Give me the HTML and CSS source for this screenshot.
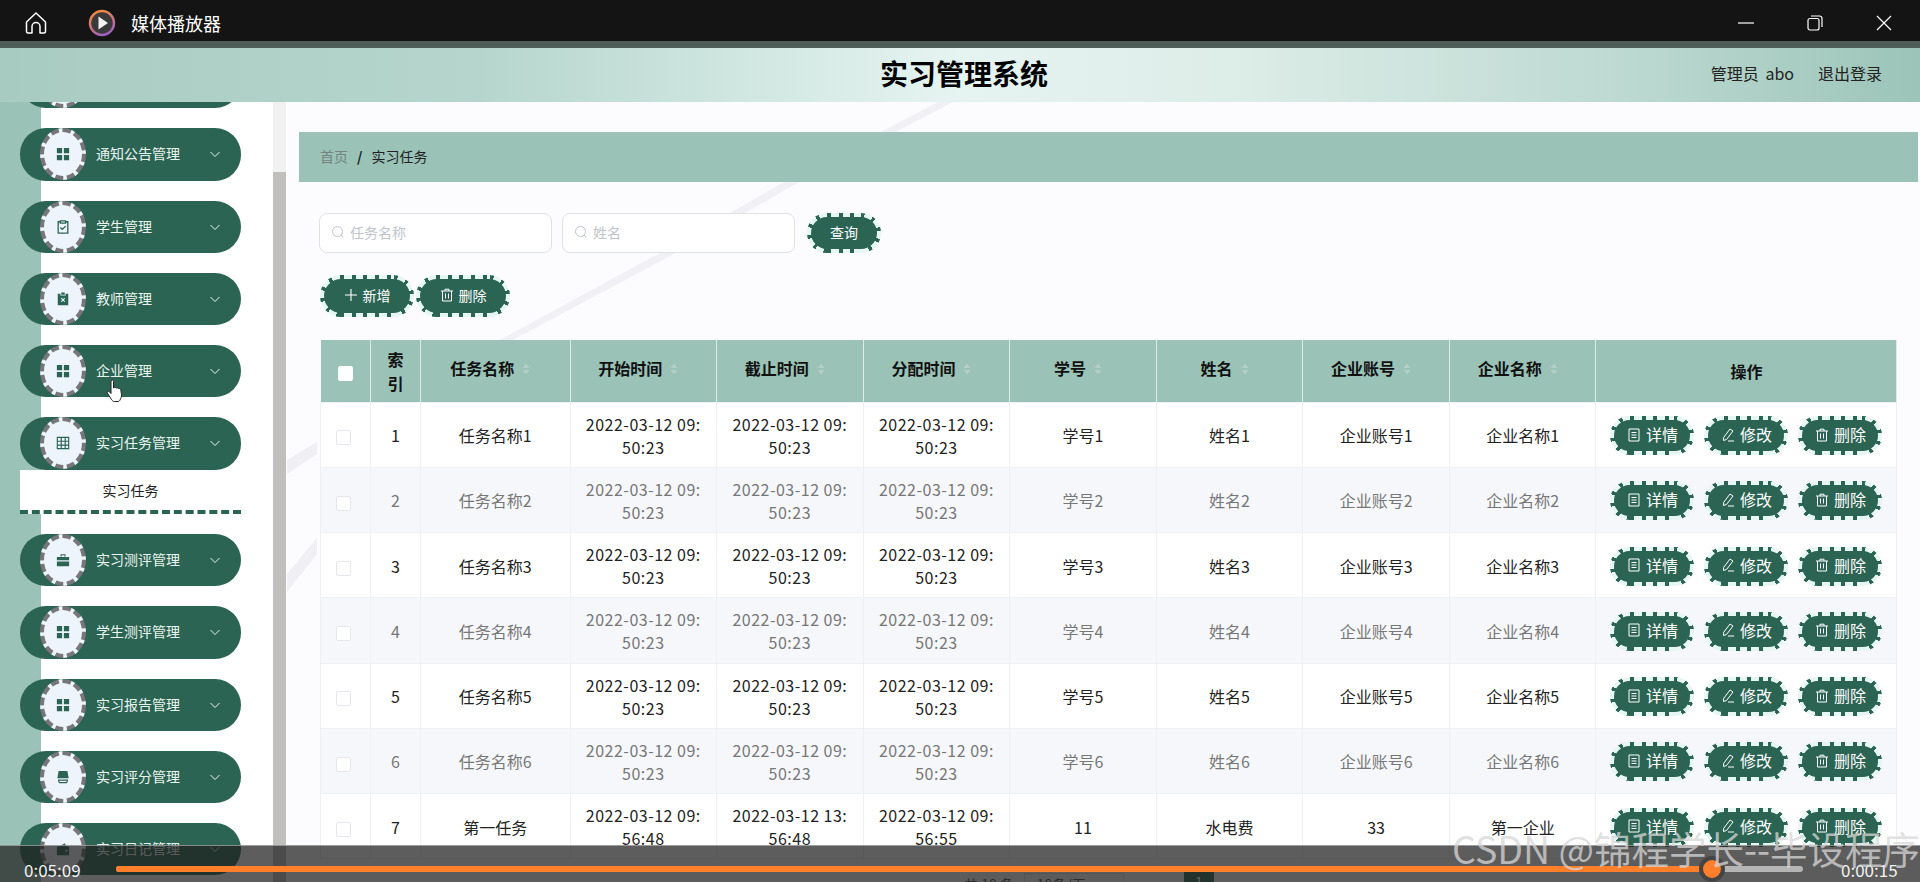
FILE: index.html
```html
<!DOCTYPE html>
<html lang="en">

<head>
    <meta charset="UTF-8">
    <title>实习管理系统</title>
    <link rel="stylesheet" href="styles.css">
</head>

<body>
    <svg class="icon-defs" width="0" height="0">
        <symbol id="i-grid" viewBox="0 0 16 16"><path d="M1 1h6v6H1zM9 1h6v6H9zM1 9h6v6H1zM9 9h6v6H9z" fill="currentColor"/></symbol>
        <symbol id="i-claim" viewBox="0 0 16 16"><path d="M5 2H2.500v13h11V2H11M5 1h6v2.500H5zM5 8.500l2.200 2.200L11 7" fill="none" stroke="currentColor" stroke-width="1.500"/></symbol>
        <symbol id="i-release" viewBox="0 0 16 16"><path d="M2 2h3v2h6V2h3v13H2zM6 0.500h4V3H6z" fill="currentColor"/><path d="M6 7l4 4M10 7l-4 4" stroke="#eef4fb" stroke-width="1.300"/></symbol>
        <symbol id="i-table" viewBox="0 0 16 16"><path d="M1.500 1.500h13v13h-13zM1.500 6h13M1.500 10.500h13M6 1.500v13M10.500 1.500v13" fill="none" stroke="currentColor" stroke-width="1.300"/></symbol>
        <symbol id="i-case" viewBox="0 0 16 16"><path d="M1 4.500h14v3.800H1zM1 9.600h14V15H1z" fill="currentColor"/><path d="M5.800 4V2h4.400v2" fill="none" stroke="currentColor" stroke-width="1.300"/></symbol>
        <symbol id="i-tray" viewBox="0 0 16 16"><path d="M3 1h10l1.500 8.500H1.500z" fill="currentColor"/><path d="M3 11.500h10v1.200l-1 1.800H4l-1-1.800z" fill="none" stroke="currentColor" stroke-width="1.300"/></symbol>
        <symbol id="i-wallet" viewBox="0 0 16 16"><path d="M1 5h14v10H1zM4 5l6-3.500L12 5" fill="currentColor"/><circle cx="12" cy="10" r="1.200" fill="#eef4fb"/></symbol>
        <symbol id="i-chevron" viewBox="0 0 12 12"><path d="M1.500 4l4.500 4.500L10.500 4" fill="none" stroke="currentColor" stroke-width="1"/></symbol>
        <symbol id="i-search" viewBox="0 0 14 14"><circle cx="6.500" cy="6.500" r="5" fill="none" stroke="currentColor"/><path d="M10 10l2.500 2.500" stroke="currentColor"/></symbol>
        <symbol id="i-plus" viewBox="0 0 14 14"><path d="M7 1v12M1 7h12" stroke="currentColor" stroke-width="1.100"/></symbol>
        <symbol id="i-trash" viewBox="0 0 14 14"><path d="M1 3h12M5 3V1.200h4V3M2.500 3v10h9V3M5.500 5.500v5M8.500 5.500v5" fill="none" stroke="currentColor"/></symbol>
        <symbol id="i-doc" viewBox="0 0 14 14"><path d="M2 1h10v12H2zM4.500 4.500h5M4.500 7h5M4.500 9.500h5" fill="none" stroke="currentColor"/></symbol>
        <symbol id="i-pen" viewBox="0 0 14 14"><path d="M9 1l3 2-6.500 8.500-3 1 .2-3.200zM7 13h6" fill="none" stroke="currentColor"/></symbol>
        <symbol id="i-caret" viewBox="0 0 8 12"><path d="M4 0.500L7.500 5h-7zM4 11.500L.5 7h7z" fill="currentColor"/></symbol>
    </svg>

    <!-- player window bar -->
    <div class="titlebar">
        <svg class="tb-home" width="24" height="24" viewBox="0 0 24 24"><path d="M2.500 11L12 2l9.500 9v9.500a1.500 1.500 0 0 1-1.500 1.500h-4v-6.500a4 4 0 0 0-8 0V22H4a1.500 1.500 0 0 1-1.500-1.500z" fill="none" stroke="#fff" stroke-width="1.500" stroke-linejoin="round"/></svg>
        <svg class="tb-logo" width="28" height="28" viewBox="0 0 28 28">
            <defs><linearGradient id="ring" x1="0.300" y1="0" x2="0.700" y2="1"><stop offset="0" stop-color="#f58a3c"/><stop offset="1" stop-color="#9a5fc8"/></linearGradient></defs>
            <circle cx="14" cy="14" r="12" fill="#3a3a3a" stroke="url(#ring)" stroke-width="2.500"/>
            <path d="M10.500 7.500L20 14l-9.500 6.500z" fill="#f2f2f2"/>
        </svg>
        <span class="tb-title">媒体播放器</span>
        <div class="tb-controls">
            <svg width="16" height="16" viewBox="0 0 16 16"><path d="M0 8h16" stroke="#fff" stroke-width="1.200"/></svg>
            <svg width="16" height="16" viewBox="0 0 16 16"><rect x="1" y="3.500" width="11" height="11.500" rx="2" fill="none" stroke="#fff" stroke-width="1.200"/><path d="M4 1h8.500A2.500 2.500 0 0 1 15 3.500V12" fill="none" stroke="#fff" stroke-width="1.200"/></svg>
            <svg width="16" height="16" viewBox="0 0 16 16"><path d="M1 1l14 14M15 1L1 15" stroke="#fff" stroke-width="1.200"/></svg>
        </div>
    </div>
    <div class="titlebar-edge"></div>

    <!-- system header -->
    <div class="header">
        <h1>实习管理系统</h1>
        <div class="header-user">
            <span>管理员 abo</span>
            <span>退出登录</span>
        </div>
    </div>

    <div class="layout">
        <!-- side menu -->
        <div class="sidebar">
            <div class="menu">
                <div class="menu-item"><span class="menu-icon"><svg><use href="#i-grid"/></svg></span><span class="menu-label">首页管理</span><svg class="chevron"><use href="#i-chevron"/></svg></div>
                <div class="menu-item"><span class="menu-icon"><svg><use href="#i-grid"/></svg></span><span class="menu-label">通知公告管理</span><svg class="chevron"><use href="#i-chevron"/></svg></div>
                <div class="menu-item"><span class="menu-icon"><svg><use href="#i-claim"/></svg></span><span class="menu-label">学生管理</span><svg class="chevron"><use href="#i-chevron"/></svg></div>
                <div class="menu-item"><span class="menu-icon"><svg><use href="#i-release"/></svg></span><span class="menu-label">教师管理</span><svg class="chevron"><use href="#i-chevron"/></svg></div>
                <div class="menu-item"><span class="menu-icon"><svg><use href="#i-grid"/></svg></span><span class="menu-label">企业管理</span><svg class="chevron"><use href="#i-chevron"/></svg></div>
                <div class="menu-group">
                    <div class="menu-item"><span class="menu-icon"><svg><use href="#i-table"/></svg></span><span class="menu-label">实习任务管理</span><svg class="chevron"><use href="#i-chevron"/></svg></div>
                    <div class="submenu">实习任务</div>
                </div>
                <div class="menu-item"><span class="menu-icon"><svg><use href="#i-case"/></svg></span><span class="menu-label">实习测评管理</span><svg class="chevron"><use href="#i-chevron"/></svg></div>
                <div class="menu-item"><span class="menu-icon"><svg><use href="#i-grid"/></svg></span><span class="menu-label">学生测评管理</span><svg class="chevron"><use href="#i-chevron"/></svg></div>
                <div class="menu-item"><span class="menu-icon"><svg><use href="#i-grid"/></svg></span><span class="menu-label">实习报告管理</span><svg class="chevron"><use href="#i-chevron"/></svg></div>
                <div class="menu-item"><span class="menu-icon"><svg><use href="#i-tray"/></svg></span><span class="menu-label">实习评分管理</span><svg class="chevron"><use href="#i-chevron"/></svg></div>
                <div class="menu-item"><span class="menu-icon"><svg><use href="#i-wallet"/></svg></span><span class="menu-label">实习日记管理</span><svg class="chevron"><use href="#i-chevron"/></svg></div>
            </div>
            <div class="scrollbar"><div class="scrollbar-thumb"></div></div>
        </div>

        <!-- main content -->
        <div class="main">
            <svg class="main-streaks" width="1633" height="780" viewBox="0 0 1633 780">
                <path d="M655 -2L490 84 369 153 209 240H222L385 153 505 84 670 -2z" fill="#f1f1f5"/>
                <path d="M30 340L0 358V372L30 352zM30 436L0 472V490L30 452z" fill="#f0f0f4"/>
            </svg>
            <div class="breadcrumb"><span class="crumb-home">首页</span><span class="crumb-sep">/</span><span>实习任务</span></div>

            <div class="search-row">
                <div class="search-box"><svg><use href="#i-search"/></svg><input type="text" placeholder="任务名称"></div>
                <div class="search-box"><svg><use href="#i-search"/></svg><input type="text" placeholder="姓名"></div>
                <button class="btn btn-query">查询</button>
            </div>

            <div class="action-row">
                <button class="btn btn-action"><svg><use href="#i-plus"/></svg>新增</button>
                <button class="btn btn-action"><svg><use href="#i-trash"/></svg>删除</button>
            </div>

            <table class="data-table">
                <colgroup>
                    <col class="col-s"><col class="col-s"><col class="col-name">
                    <col class="col-m"><col class="col-m"><col class="col-m"><col class="col-m"><col class="col-m"><col class="col-m"><col class="col-m">
                    <col class="col-ops">
                </colgroup>
                <thead>
                    <tr>
                        <th><span class="check check-head"></span></th>
                        <th>索引</th>
                        <th class="sortable">任务名称<svg class="sort"><use href="#i-caret"/></svg></th>
                        <th class="sortable">开始时间<svg class="sort"><use href="#i-caret"/></svg></th>
                        <th class="sortable">截止时间<svg class="sort"><use href="#i-caret"/></svg></th>
                        <th class="sortable">分配时间<svg class="sort"><use href="#i-caret"/></svg></th>
                        <th class="sortable">学号<svg class="sort"><use href="#i-caret"/></svg></th>
                        <th class="sortable">姓名<svg class="sort"><use href="#i-caret"/></svg></th>
                        <th class="sortable">企业账号<svg class="sort"><use href="#i-caret"/></svg></th>
                        <th class="sortable">企业名称<svg class="sort"><use href="#i-caret"/></svg></th>
                        <th>操作</th>
                    </tr>
                </thead>
                <tbody>
                    <tr>
                        <td><span class="check"></span></td><td>1</td><td>任务名称1</td>
                        <td class="date">2022-03-12 09:50:23</td><td class="date">2022-03-12 09:50:23</td><td class="date">2022-03-12 09:50:23</td>
                        <td>学号1</td><td>姓名1</td><td>企业账号1</td><td>企业名称1</td>
                        <td><div class="ops"><button class="btn btn-row"><svg><use href="#i-doc"/></svg>详情</button><button class="btn btn-row"><svg><use href="#i-pen"/></svg>修改</button><button class="btn btn-row"><svg><use href="#i-trash"/></svg>删除</button></div></td>
                    </tr>
                    <tr>
                        <td><span class="check"></span></td><td>2</td><td>任务名称2</td>
                        <td class="date">2022-03-12 09:50:23</td><td class="date">2022-03-12 09:50:23</td><td class="date">2022-03-12 09:50:23</td>
                        <td>学号2</td><td>姓名2</td><td>企业账号2</td><td>企业名称2</td>
                        <td><div class="ops"><button class="btn btn-row"><svg><use href="#i-doc"/></svg>详情</button><button class="btn btn-row"><svg><use href="#i-pen"/></svg>修改</button><button class="btn btn-row"><svg><use href="#i-trash"/></svg>删除</button></div></td>
                    </tr>
                    <tr>
                        <td><span class="check"></span></td><td>3</td><td>任务名称3</td>
                        <td class="date">2022-03-12 09:50:23</td><td class="date">2022-03-12 09:50:23</td><td class="date">2022-03-12 09:50:23</td>
                        <td>学号3</td><td>姓名3</td><td>企业账号3</td><td>企业名称3</td>
                        <td><div class="ops"><button class="btn btn-row"><svg><use href="#i-doc"/></svg>详情</button><button class="btn btn-row"><svg><use href="#i-pen"/></svg>修改</button><button class="btn btn-row"><svg><use href="#i-trash"/></svg>删除</button></div></td>
                    </tr>
                    <tr>
                        <td><span class="check"></span></td><td>4</td><td>任务名称4</td>
                        <td class="date">2022-03-12 09:50:23</td><td class="date">2022-03-12 09:50:23</td><td class="date">2022-03-12 09:50:23</td>
                        <td>学号4</td><td>姓名4</td><td>企业账号4</td><td>企业名称4</td>
                        <td><div class="ops"><button class="btn btn-row"><svg><use href="#i-doc"/></svg>详情</button><button class="btn btn-row"><svg><use href="#i-pen"/></svg>修改</button><button class="btn btn-row"><svg><use href="#i-trash"/></svg>删除</button></div></td>
                    </tr>
                    <tr>
                        <td><span class="check"></span></td><td>5</td><td>任务名称5</td>
                        <td class="date">2022-03-12 09:50:23</td><td class="date">2022-03-12 09:50:23</td><td class="date">2022-03-12 09:50:23</td>
                        <td>学号5</td><td>姓名5</td><td>企业账号5</td><td>企业名称5</td>
                        <td><div class="ops"><button class="btn btn-row"><svg><use href="#i-doc"/></svg>详情</button><button class="btn btn-row"><svg><use href="#i-pen"/></svg>修改</button><button class="btn btn-row"><svg><use href="#i-trash"/></svg>删除</button></div></td>
                    </tr>
                    <tr>
                        <td><span class="check"></span></td><td>6</td><td>任务名称6</td>
                        <td class="date">2022-03-12 09:50:23</td><td class="date">2022-03-12 09:50:23</td><td class="date">2022-03-12 09:50:23</td>
                        <td>学号6</td><td>姓名6</td><td>企业账号6</td><td>企业名称6</td>
                        <td><div class="ops"><button class="btn btn-row"><svg><use href="#i-doc"/></svg>详情</button><button class="btn btn-row"><svg><use href="#i-pen"/></svg>修改</button><button class="btn btn-row"><svg><use href="#i-trash"/></svg>删除</button></div></td>
                    </tr>
                    <tr>
                        <td><span class="check"></span></td><td>7</td><td>第一任务</td>
                        <td class="date">2022-03-12 09:56:48</td><td class="date">2022-03-12 13:56:48</td><td class="date">2022-03-12 09:56:55</td>
                        <td>11</td><td>水电费</td><td>33</td><td>第一企业</td>
                        <td><div class="ops"><button class="btn btn-row"><svg><use href="#i-doc"/></svg>详情</button><button class="btn btn-row"><svg><use href="#i-pen"/></svg>修改</button><button class="btn btn-row"><svg><use href="#i-trash"/></svg>删除</button></div></td>
                    </tr>
                </tbody>
            </table>

            <div class="pager"><span>共 10 条</span><span class="pager-size">10条/页</span><span class="pager-num">1</span></div>
        </div>
    </div>

    <!-- mouse pointer caught in the recording -->
    <svg class="pointer" width="18" height="24" viewBox="0 0 18 24"><path d="M5 2c1-1.500 2.500-1 2.500.5V9l1-.5c1-.3 1.500 0 1.800.6 1-.5 1.800-.2 2.200.5 1-.4 2 0 2.300 1l.7 5c.2 2-.5 3.500-1.500 5.400-.4.800-1 1.500-2 1.500H8.500c-1.500 0-2.500-1-3.200-2.200L1.300 14c-.7-1.200.8-2.500 2-1.300L5 14.500z" fill="#fff" stroke="#222" stroke-width="1"/></svg>

    <!-- player controls over the page -->
    <div class="player-bar">
        <span class="player-time">0:05:09</span>
        <div class="progress"><div class="progress-done"></div><div class="progress-knob"></div></div>
        <span class="player-end">0:00:15</span>
    </div>
    <div class="watermark">CSDN @锦程学长--毕设程序</div>
</body>

</html>
```

FILE: styles.css
```css
* {
    box-sizing: border-box;
}

html,
body {
    height: 100%;
}

body {
    margin: 0;
    overflow: hidden;
    position: relative;
    display: flex;
    flex-direction: column;
    font-family: "Noto Sans CJK SC", "Liberation Sans", sans-serif;
    font-size: 14px;
    color: #222;
    background-color: #fff;
}

.icon-defs {
    position: absolute;
}

/* window bar */
.titlebar {
    height: 41px;
    flex: none;
    display: flex;
    align-items: center;
    padding: 5px 0 0 24px;
    background-color: #141414;
    color: #fff;
}

.tb-logo {
    margin-left: 40px;
}

.tb-title {
    margin-left: 15px;
    font-size: 18px;
}

.tb-controls {
    margin-left: auto;
    display: flex;
    gap: 53px;
    padding-right: 28px;
}

.titlebar-edge {
    height: 7px;
    flex: none;
    background-color: #4f5d59;
}

/* header */
.header {
    height: 54px;
    flex: none;
    position: relative;
    display: flex;
    align-items: center;
    justify-content: flex-end;
    padding: 0 38px 5px 0;
    background: linear-gradient(90deg, #a8cbc1 0%, #b6d6cd 25%, #e6f4f1 50%, #dcece7 65%, #bcd9d1 85%, #9cc4b8 100%);
}

.header h1 {
    position: absolute;
    left: 8px;
    right: 0;
    top: -2px;
    margin: 0;
    text-align: center;
    font-size: 28px;
    line-height: 54px;
    font-weight: 700;
    color: #000;
}

.header-user {
    display: flex;
    gap: 24px;
    font-size: 16px;
    word-spacing: 3px;
    color: #222;
}

/* sidebar */
.layout {
    flex: 1;
    min-height: 0;
    display: flex;
}

.sidebar {
    width: 287px;
    flex: none;
    display: flex;
    overflow: hidden;
    background: linear-gradient(90deg, #9ac2b6 41px, #fff 41px);
}

.menu {
    width: 273px;
    flex: none;
    padding-left: 20px;
    margin-top: -46px;
}

.menu-item {
    width: 221px;
    height: 52.250px;
    margin-bottom: 20px;
    display: flex;
    align-items: center;
    padding-left: 20px;
    border-radius: 26px;
    background-color: #2c6454;
    color: #e9f5ef;
}

.menu-icon {
    width: 46px;
    height: 52px;
    flex: none;
    display: flex;
    align-items: center;
    justify-content: center;
    border: 4px dashed #77767a;
    border-radius: 50%;
    background-color: #eef4fb;
    color: #2c6454;
}

.menu-icon svg {
    width: 14px;
    height: 14px;
}

.menu-label {
    margin-left: 10px;
    padding-bottom: 2px;
    flex: 1;
}

.chevron {
    width: 12px;
    height: 12px;
    margin-right: 20px;
}

.menu-group .menu-item {
    margin-bottom: 0;
}

.menu-group {
    margin-bottom: 20px;
}

.submenu {
    width: 221px;
    height: 44.500px;
    line-height: 40px;
    text-align: center;
    background-color: #fff;
    color: #222;
    border-bottom: 4px dashed #2c6454;
}

.scrollbar {
    width: 13px;
    flex: none;
    background-color: #f1f1f1;
    padding-top: 70px;
}

.scrollbar-thumb {
    height: 100%;
    background-color: #c1bebe;
}

/* main */
.main {
    flex: 1;
    min-width: 0;
    position: relative;
    overflow: hidden;
    padding: 30px 2px 0 12px;
    background-color: #fcfcfe;
}

.main-streaks {
    position: absolute;
    left: 0;
    top: 0;
}

.breadcrumb {
    position: relative;
    height: 50px;
    display: flex;
    align-items: center;
    padding: 0 0 2px 21px;
    background-color: #9ac2b6;
    color: #222;
}

.crumb-home {
    color: #74857f;
}

.crumb-sep {
    margin: 0 9px;
    font-weight: 700;
}

.search-row {
    position: relative;
    display: flex;
    align-items: center;
    gap: 10px;
    margin: 31px 0 0 20px;
}

.search-box {
    width: 233px;
    height: 40px;
    display: flex;
    align-items: center;
    gap: 3px;
    padding: 0 0 2px 11px;
    border: 1px solid #dfe1e8;
    border-radius: 8px;
    background-color: #fff;
    color: #c0c4cc;
}

.search-box svg {
    width: 14px;
    height: 14px;
    flex: none;
}

.search-box input {
    border: none;
    outline: none;
    min-width: 0;
    width: 100%;
    background: transparent;
    font: inherit;
}

.search-box input::placeholder {
    color: #c0c4cc;
}

/* the toothed edge: a solid pill over stripes on the straight part and rays on the two ends */
.btn {
    display: inline-flex;
    align-items: center;
    justify-content: center;
    gap: 5px;
    padding: 0 0 2px;
    border: 4px solid transparent;
    border-radius: 22px;
    background-color: #e6f6f3;
    background-image:
        linear-gradient(#2c6454, #2c6454),
        repeating-linear-gradient(90deg, #2c6454 0 4px, transparent 4px 11.700px),
        repeating-conic-gradient(at 100% 50%, #2c6454 0 11deg, transparent 11deg 36deg),
        repeating-conic-gradient(at 0 50%, #2c6454 0 11deg, transparent 11deg 36deg);
    background-origin: border-box;
    background-clip: padding-box, border-box, border-box, border-box;
    background-size: 100% 100%, calc(100% - 40px) 100%, 20px 100%, 20px 100%;
    background-position: 0 0, center, left, right;
    background-repeat: no-repeat;
    color: #fff;
    font: inherit;
    cursor: pointer;
}

.btn svg {
    width: 14px;
    height: 14px;
    flex: none;
}

.btn-query {
    width: 74px;
    height: 40px;
    margin-left: 2px;
}

.action-row {
    position: relative;
    display: flex;
    gap: 2px;
    margin: 22px 0 0 21px;
}

.btn-action {
    width: 94px;
    height: 42px;
}

/* table */
.data-table {
    position: relative;
    width: 1577px;
    margin: 23px 0 0 21px;
    border-collapse: collapse;
    table-layout: fixed;
    font-size: 16px;
}

.col-s {
    width: 50px;
}

.col-name {
    width: 149.500px;
}

.col-m {
    width: 146.570px;
}

.col-ops {
    width: 301px;
}

.data-table th {
    height: 62px;
    padding: 0 12px;
    background-color: #9ac2b6;
    border-right: 1px solid #dcebe6;
    font-size: 16px;
    font-weight: 700;
    color: #111;
    text-align: center;
    line-height: 24px;
}

.data-table th.sortable {
    padding: 0 22px 6px 12px;
}

.data-table td {
    height: 65.250px;
    padding: 2px 12px 0;
    border: 1px solid #eff0f5;
    background-color: #fff;
    text-align: center;
    line-height: 23px;
    color: #222;
    word-break: break-all;
}

.data-table td.date {
    letter-spacing: 0.500px;
}

.data-table tbody tr:nth-child(even) td {
    background-color: #f6f7fb;
    color: #777;
}

.sort {
    width: 8px;
    height: 12px;
    margin-left: 8px;
    color: #b4cfc7;
}

.check {
    display: inline-block;
    width: 15px;
    height: 15px;
    margin-right: 5px;
    vertical-align: middle;
    border: 1px solid #e6e7ee;
    border-radius: 2px;
    background-color: #fff;
}

.check-head {
    margin-right: 0;
    border-color: #fff;
}

.data-table td .ops {
    display: flex;
    justify-content: center;
    gap: 10px;
}

.btn-row {
    width: 84px;
    height: 39px;
    flex: none;
}

.pager {
    position: relative;
    display: flex;
    align-items: center;
    margin: 12px 0 0 665px;
    font-size: 14px;
    color: #555;
}

.pager-size {
    width: 100px;
    margin-left: 10px;
    padding-left: 12px;
    border: 1px solid #dcdfe6;
}

.pager-num {
    width: 30px;
    height: 26px;
    margin-left: 60px;
    text-align: center;
    background-color: #2c6454;
    color: #fff;
}

/* recording overlay */
.pointer {
    position: absolute;
    left: 106px;
    top: 379px;
}

.player-bar {
    position: absolute;
    left: 0;
    right: 0;
    bottom: 0;
    height: 37px;
    border-top: 1px solid rgba(200, 200, 200, 0.6);
    background-color: rgba(30, 30, 30, 0.72);
    color: #f2f2f2;
    font-size: 17px;
}

.player-time,
.player-end {
    position: absolute;
    line-height: 20px;
    top: 14px;
}

.player-time {
    left: 24px;
}

.player-end {
    left: 1841px;
}

.progress {
    position: absolute;
    left: 116px;
    top: 20px;
    width: 1687px;
    height: 6px;
    border-radius: 3px;
    background-color: #b5b5b5;
}

.progress-done {
    width: 1597px;
    height: 100%;
    border-radius: 3px 0 0 3px;
    background-color: #ff7f2a;
}

.progress-knob {
    position: absolute;
    left: 1583px;
    top: -10px;
    width: 26px;
    height: 26px;
    border: 4px solid #444;
    border-radius: 50%;
    background-color: #ff7f2a;
}

.watermark {
    position: absolute;
    left: 1452px;
    top: 824px;
    font-size: 37.500px;
    line-height: 48px;
    white-space: nowrap;
    color: rgba(215, 215, 215, 0.75);
}
```
